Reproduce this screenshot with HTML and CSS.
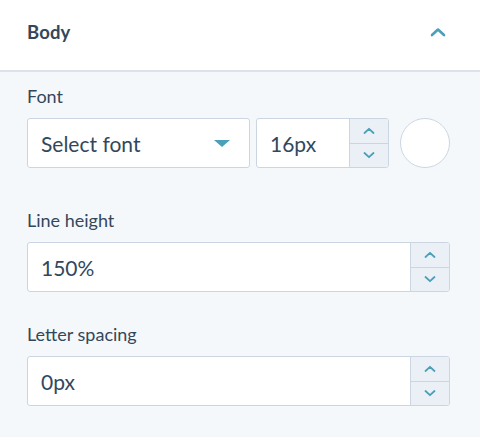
FILE: index.html
```html
<!DOCTYPE html>
<html>
<head>
<meta charset="utf-8">
<link rel="stylesheet" href="styles.css">
</head>
<body>
<div class="panel">
  <div class="header">
    <span class="title">Body</span>
    <svg class="collapse" width="16" height="10" viewBox="0 0 16 10"><path d="M2 8 L8 2.5 L14 8" fill="none" stroke="#4aa0b9" stroke-width="2.6" stroke-linecap="round" stroke-linejoin="round"/></svg>
  </div>
  <div class="content">
    <div class="field first">
      <div class="label">Font</div>
      <div class="row">
        <div class="select">
          <span class="value">Select font</span>
          <svg class="caret" width="16" height="7" viewBox="0 0 16 7"><path d="M0 0 H16 L8 7 Z" fill="#4aa0b9"/></svg>
        </div>
        <div class="number small">
          <span class="value">16px</span>
          <div class="stepper">
            <div class="step"><svg width="12" height="8" viewBox="0 0 12 8"><path d="M1.5 6 L6 1.8 L10.5 6" fill="none" stroke="#4aa0b9" stroke-width="1.8" stroke-linecap="round" stroke-linejoin="round"/></svg></div>
            <div class="step"><svg width="12" height="8" viewBox="0 0 12 8"><path d="M1.5 2 L6 6.2 L10.5 2" fill="none" stroke="#4aa0b9" stroke-width="1.8" stroke-linecap="round" stroke-linejoin="round"/></svg></div>
          </div>
        </div>
        <div class="swatch"></div>
      </div>
    </div>
    <div class="field">
      <div class="label">Line height</div>
      <div class="number wide">
        <span class="value">150%</span>
        <div class="stepper">
          <div class="step"><svg width="12" height="8" viewBox="0 0 12 8"><path d="M1.5 6 L6 1.8 L10.5 6" fill="none" stroke="#4aa0b9" stroke-width="1.8" stroke-linecap="round" stroke-linejoin="round"/></svg></div>
          <div class="step"><svg width="12" height="8" viewBox="0 0 12 8"><path d="M1.5 2 L6 6.2 L10.5 2" fill="none" stroke="#4aa0b9" stroke-width="1.8" stroke-linecap="round" stroke-linejoin="round"/></svg></div>
        </div>
      </div>
    </div>
    <div class="field">
      <div class="label">Letter spacing</div>
      <div class="number wide">
        <span class="value">0px</span>
        <div class="stepper">
          <div class="step"><svg width="12" height="8" viewBox="0 0 12 8"><path d="M1.5 6 L6 1.8 L10.5 6" fill="none" stroke="#4aa0b9" stroke-width="1.8" stroke-linecap="round" stroke-linejoin="round"/></svg></div>
          <div class="step"><svg width="12" height="8" viewBox="0 0 12 8"><path d="M1.5 2 L6 6.2 L10.5 2" fill="none" stroke="#4aa0b9" stroke-width="1.8" stroke-linecap="round" stroke-linejoin="round"/></svg></div>
        </div>
      </div>
    </div>
  </div>
</div>
</body>
</html>
```
FILE: styles.css
```css
html, body {
  margin: 0;
  padding: 0;
  background: #f5f8fa;
}
body {
  font-family: Lato, "Noto Sans", sans-serif;
  color: #33475b;
  width: 480px;
  height: 437px;
  overflow: hidden;
}
.header {
  height: 70px;
  background: #ffffff;
  border-bottom: 2px solid #dbe2ea;
  display: flex;
  align-items: center;
  justify-content: space-between;
  padding: 0 34px 0 27px;
  box-sizing: content-box;
}
.title {
  font-size: 18.5px;
  font-weight: 700;
  margin-top: -6px;
  letter-spacing: 0.1px;
}
.collapse {
  margin-top: -6px;
}
.content {
  padding: 13px 30px 0 27px;
}
.field {
  margin-bottom: 31px;
}
.field.first {
  margin-bottom: 41px;
}
.label {
  font-size: 18px;
  font-weight: 400;
  line-height: 22px;
  margin-bottom: 11px;
}
.row {
  display: flex;
  align-items: center;
  gap: 6px;
}
.select, .number {
  height: 50px;
  box-sizing: border-box;
  background: #ffffff;
  border: 1px solid #cbd6e2;
  border-radius: 3px;
  display: flex;
  align-items: center;
}
.select {
  width: 223px;
  padding: 0 19px 0 13px;
  justify-content: space-between;
}
.value {
  font-size: 21px;
  color: #33475b;
}
.number .value {
  flex: 1;
  padding-left: 13px;
}
.number.small {
  width: 133px;
}
.number.wide {
  width: 423px;
}
.stepper {
  width: 38px;
  height: 100%;
  display: flex;
  flex-direction: column;
  background: #eaf0f6;
  border-left: 1px solid #cbd6e2;
  border-radius: 0 2px 2px 0;
}
.step {
  flex: 1;
  display: flex;
  align-items: center;
  justify-content: center;
}
.step + .step {
  border-top: 1px solid #cbd6e2;
}
.swatch {
  width: 50px;
  height: 50px;
  box-sizing: border-box;
  border-radius: 50%;
  background: #ffffff;
  border: 1px solid #cbd6e2;
  margin-left: 5px;
}
```
